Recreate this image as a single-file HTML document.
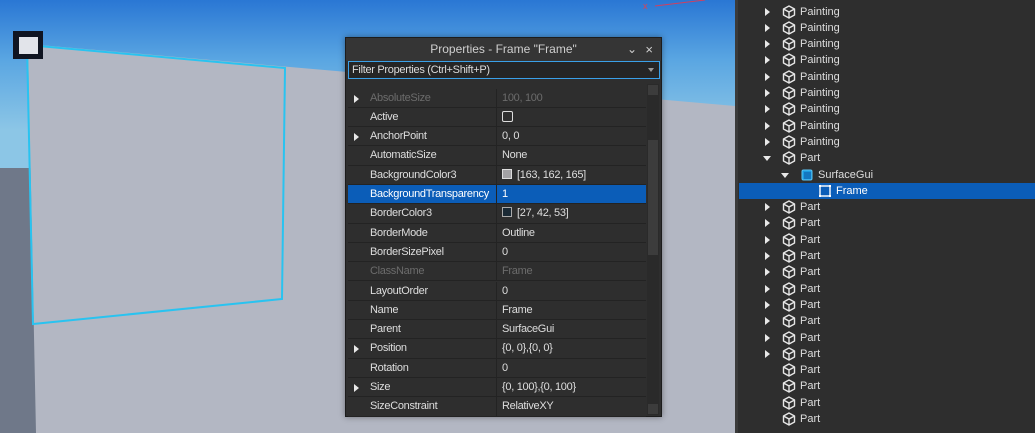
<!DOCTYPE html>
<html><head><meta charset="utf-8">
<style>
*{margin:0;padding:0;box-sizing:border-box}
body{width:1035px;height:433px;overflow:hidden;position:relative;font-family:"Liberation Sans","DejaVu Sans",sans-serif;font-size:11px;background:linear-gradient(180deg,#2a77d4 0px,#5aa6e2 60px,#8cc6e6 130px,#8cc6e6 433px)}
.abs{position:absolute}
#panel{left:345px;top:37px;width:317px;height:380px;background:#2e2e2e;border:1px solid #1c1c1c;box-shadow:0 0 6px rgba(0,0,0,.4)}
.title{position:absolute;left:0;top:0;width:100%;height:23px;background:#353535;color:#cfcfcf;font-size:12px;text-align:center;line-height:23px}
.filter{position:absolute;left:2px;top:23px;width:312px;height:18px;background:#252525;border:1px solid #3aa0e8;color:#dcdcdc;line-height:16px;padding-left:3px;font-size:11px;letter-spacing:-0.3px}
.row{position:absolute;left:2px;width:298px;height:19.3px;border-bottom:1px solid #232323;color:#dedede;line-height:19px;letter-spacing:-0.3px}
.row .n{position:absolute;left:22px}
.row .v{position:absolute;left:148px;border-left:1px solid #232323;height:19px;padding-left:5px;width:150px}
.row.dis{color:#6c6c6c}
.row.sel{background:#0b5db8;color:#fff}
.tri{position:absolute;left:6px;top:6px;width:0;height:0;border-top:4px solid transparent;border-bottom:4px solid transparent;border-left:5px solid #e8e8e8}
.sw{display:inline-block;width:10px;height:10px;border:1px solid #ddd;vertical-align:-1px;margin-right:5px}
#exp{left:735px;top:0;width:300px;height:433px;background:#2e2e2e;border-left:3px solid #3a3a3a}
.t{position:absolute;height:16.3px;line-height:17px;color:#dedede;font-size:11px;width:300px}
.t .a{position:absolute;top:4px;width:0;height:0;border-top:4px solid transparent;border-bottom:4px solid transparent;border-left:5px solid #e8e8e8}
.t .d{position:absolute;top:6px;width:0;height:0;border-left:4px solid transparent;border-right:4px solid transparent;border-top:5px solid #e8e8e8}
.t svg{position:absolute;top:1px}
</style></head><body>
<svg class="abs" style="left:0;top:0" width="735" height="433">
<rect x="0" y="168" width="40" height="265" fill="#6f7889"/>
<polygon points="28,44 735,106 735,433 36,433" fill="#b3b7c3"/>
<polygon points="27,45 285,68 282,299 33,324" fill="none" stroke="#29c3f0" stroke-width="2"/>
<rect x="13" y="31" width="30" height="28" fill="#101522"/>
<rect x="19" y="37" width="19" height="17" fill="#e2e4ea"/>
<line x1="655" y1="6" x2="705" y2="0" stroke="#d04060" stroke-width="1"/>
<text x="643" y="9" fill="#e04050" font-size="9" font-family="Liberation Sans">x</text>
</svg>

<div id="panel" class="abs">
<div class="title">Properties - Frame "Frame"<span style="position:absolute;right:24px;top:0">&#8964;</span><span style="position:absolute;right:8px;top:0;font-size:13px">&#215;</span></div>
<div class="filter">Filter Properties (Ctrl+Shift+P)<span style="position:absolute;right:5px;top:6px;border-left:3px solid transparent;border-right:3px solid transparent;border-top:4px solid #999"></span></div>
<div class="abs" style="left:301px;top:46px;width:12px;height:331px;background:#2a2a2a"></div>
<div class="abs" style="left:302px;top:47px;width:10px;height:10px;background:#3c3c3c"></div>
<div class="abs" style="left:302px;top:102px;width:10px;height:115px;background:#3c3c3c"></div>
<div class="abs" style="left:302px;top:366px;width:10px;height:10px;background:#3c3c3c"></div>
<div class="row dis" style="top:50.5px"><span class="tri"></span><span class="n">AbsoluteSize</span><span class="v">100, 100</span></div>
<div class="row" style="top:69.8px"><span class="n">Active</span><span class="v"><span class="sw" style="border-color:#ddd;background:#2e2e2e;width:11px;height:11px;border-radius:2px;vertical-align:-2px"></span></span></div>
<div class="row" style="top:89.1px"><span class="tri"></span><span class="n">AnchorPoint</span><span class="v">0, 0</span></div>
<div class="row" style="top:108.4px"><span class="n">AutomaticSize</span><span class="v">None</span></div>
<div class="row" style="top:127.7px"><span class="n">BackgroundColor3</span><span class="v"><span class="sw" style="background:#a3a2a5"></span>[163, 162, 165]</span></div>
<div class="row sel" style="top:147px"><span class="n">BackgroundTransparency</span><span class="v">1</span></div>
<div class="row" style="top:166.3px"><span class="n">BorderColor3</span><span class="v"><span class="sw" style="background:#1b2a35;border-color:#aaa"></span>[27, 42, 53]</span></div>
<div class="row" style="top:185.6px"><span class="n">BorderMode</span><span class="v">Outline</span></div>
<div class="row" style="top:204.9px"><span class="n">BorderSizePixel</span><span class="v">0</span></div>
<div class="row dis" style="top:224.2px"><span class="n">ClassName</span><span class="v">Frame</span></div>
<div class="row" style="top:243.5px"><span class="n">LayoutOrder</span><span class="v">0</span></div>
<div class="row" style="top:262.8px"><span class="n">Name</span><span class="v">Frame</span></div>
<div class="row" style="top:282.1px"><span class="n">Parent</span><span class="v">SurfaceGui</span></div>
<div class="row" style="top:301.4px"><span class="tri"></span><span class="n">Position</span><span class="v">{0, 0},{0, 0}</span></div>
<div class="row" style="top:320.7px"><span class="n">Rotation</span><span class="v">0</span></div>
<div class="row" style="top:340px"><span class="tri"></span><span class="n">Size</span><span class="v">{0, 100},{0, 100}</span></div>
<div class="row" style="top:359.3px"><span class="n">SizeConstraint</span><span class="v">RelativeXY</span></div>
</div>

<svg width="0" height="0" style="position:absolute"><defs><symbol id="cube" viewBox="0 0 14 14"><path d="M7 1 L12.5 4 L12.5 10 L7 13 L1.5 10 L1.5 4 Z M1.5 4 L7 7 L12.5 4 M7 7 L7 13" fill="none" stroke="#e6e6e6" stroke-width="1.4" stroke-linejoin="round"/></symbol></defs></svg>

<div id="exp" class="abs">
<div class="t" style="top:3.5px"><span class="a" style="left:27px"></span><svg style="left:44px" width="14" height="14"><use href="#cube"/></svg><span style="position:absolute;left:62px">Painting</span></div>
<div class="t" style="top:19.8px"><span class="a" style="left:27px"></span><svg style="left:44px" width="14" height="14"><use href="#cube"/></svg><span style="position:absolute;left:62px">Painting</span></div>
<div class="t" style="top:36.1px"><span class="a" style="left:27px"></span><svg style="left:44px" width="14" height="14"><use href="#cube"/></svg><span style="position:absolute;left:62px">Painting</span></div>
<div class="t" style="top:52.4px"><span class="a" style="left:27px"></span><svg style="left:44px" width="14" height="14"><use href="#cube"/></svg><span style="position:absolute;left:62px">Painting</span></div>
<div class="t" style="top:68.7px"><span class="a" style="left:27px"></span><svg style="left:44px" width="14" height="14"><use href="#cube"/></svg><span style="position:absolute;left:62px">Painting</span></div>
<div class="t" style="top:85px"><span class="a" style="left:27px"></span><svg style="left:44px" width="14" height="14"><use href="#cube"/></svg><span style="position:absolute;left:62px">Painting</span></div>
<div class="t" style="top:101.3px"><span class="a" style="left:27px"></span><svg style="left:44px" width="14" height="14"><use href="#cube"/></svg><span style="position:absolute;left:62px">Painting</span></div>
<div class="t" style="top:117.6px"><span class="a" style="left:27px"></span><svg style="left:44px" width="14" height="14"><use href="#cube"/></svg><span style="position:absolute;left:62px">Painting</span></div>
<div class="t" style="top:133.9px"><span class="a" style="left:27px"></span><svg style="left:44px" width="14" height="14"><use href="#cube"/></svg><span style="position:absolute;left:62px">Painting</span></div>
<div class="t" style="top:150.2px"><span class="d" style="left:25px"></span><svg style="left:44px" width="14" height="14"><use href="#cube"/></svg><span style="position:absolute;left:62px">Part</span></div>
<div class="t" style="top:166.5px"><span class="d" style="left:43px"></span><svg style="left:62px" width="14" height="14"><rect x="2" y="2" width="10" height="10" rx="1.5" fill="#1a9be0" stroke="#5cc4f5"/><rect x="4" y="4" width="7" height="7" fill="#1477c0"/></svg><span style="position:absolute;left:80px">SurfaceGui</span></div>
<div class="t" style="top:182.8px;background:#0b5db8;left:1px;color:#fff"><svg style="left:79px" width="14" height="14"><rect x="2" y="2" width="10" height="10" fill="none" stroke="#fff" stroke-width="1.4"/><rect x="1" y="1" width="2" height="2" fill="#fff"/><rect x="11" y="1" width="2" height="2" fill="#fff"/><rect x="1" y="11" width="2" height="2" fill="#fff"/><rect x="11" y="11" width="2" height="2" fill="#fff"/></svg><span style="position:absolute;left:97px">Frame</span></div>
<div class="t" style="top:199.1px"><span class="a" style="left:27px"></span><svg style="left:44px" width="14" height="14"><use href="#cube"/></svg><span style="position:absolute;left:62px">Part</span></div>
<div class="t" style="top:215.4px"><span class="a" style="left:27px"></span><svg style="left:44px" width="14" height="14"><use href="#cube"/></svg><span style="position:absolute;left:62px">Part</span></div>
<div class="t" style="top:231.7px"><span class="a" style="left:27px"></span><svg style="left:44px" width="14" height="14"><use href="#cube"/></svg><span style="position:absolute;left:62px">Part</span></div>
<div class="t" style="top:248px"><span class="a" style="left:27px"></span><svg style="left:44px" width="14" height="14"><use href="#cube"/></svg><span style="position:absolute;left:62px">Part</span></div>
<div class="t" style="top:264.3px"><span class="a" style="left:27px"></span><svg style="left:44px" width="14" height="14"><use href="#cube"/></svg><span style="position:absolute;left:62px">Part</span></div>
<div class="t" style="top:280.6px"><span class="a" style="left:27px"></span><svg style="left:44px" width="14" height="14"><use href="#cube"/></svg><span style="position:absolute;left:62px">Part</span></div>
<div class="t" style="top:296.9px"><span class="a" style="left:27px"></span><svg style="left:44px" width="14" height="14"><use href="#cube"/></svg><span style="position:absolute;left:62px">Part</span></div>
<div class="t" style="top:313.2px"><span class="a" style="left:27px"></span><svg style="left:44px" width="14" height="14"><use href="#cube"/></svg><span style="position:absolute;left:62px">Part</span></div>
<div class="t" style="top:329.5px"><span class="a" style="left:27px"></span><svg style="left:44px" width="14" height="14"><use href="#cube"/></svg><span style="position:absolute;left:62px">Part</span></div>
<div class="t" style="top:345.8px"><span class="a" style="left:27px"></span><svg style="left:44px" width="14" height="14"><use href="#cube"/></svg><span style="position:absolute;left:62px">Part</span></div>
<div class="t" style="top:362.1px"><svg style="left:44px" width="14" height="14"><use href="#cube"/></svg><span style="position:absolute;left:62px">Part</span></div>
<div class="t" style="top:378.4px"><svg style="left:44px" width="14" height="14"><use href="#cube"/></svg><span style="position:absolute;left:62px">Part</span></div>
<div class="t" style="top:394.7px"><svg style="left:44px" width="14" height="14"><use href="#cube"/></svg><span style="position:absolute;left:62px">Part</span></div>
<div class="t" style="top:411px"><svg style="left:44px" width="14" height="14"><use href="#cube"/></svg><span style="position:absolute;left:62px">Part</span></div>
</div>
</body></html>
